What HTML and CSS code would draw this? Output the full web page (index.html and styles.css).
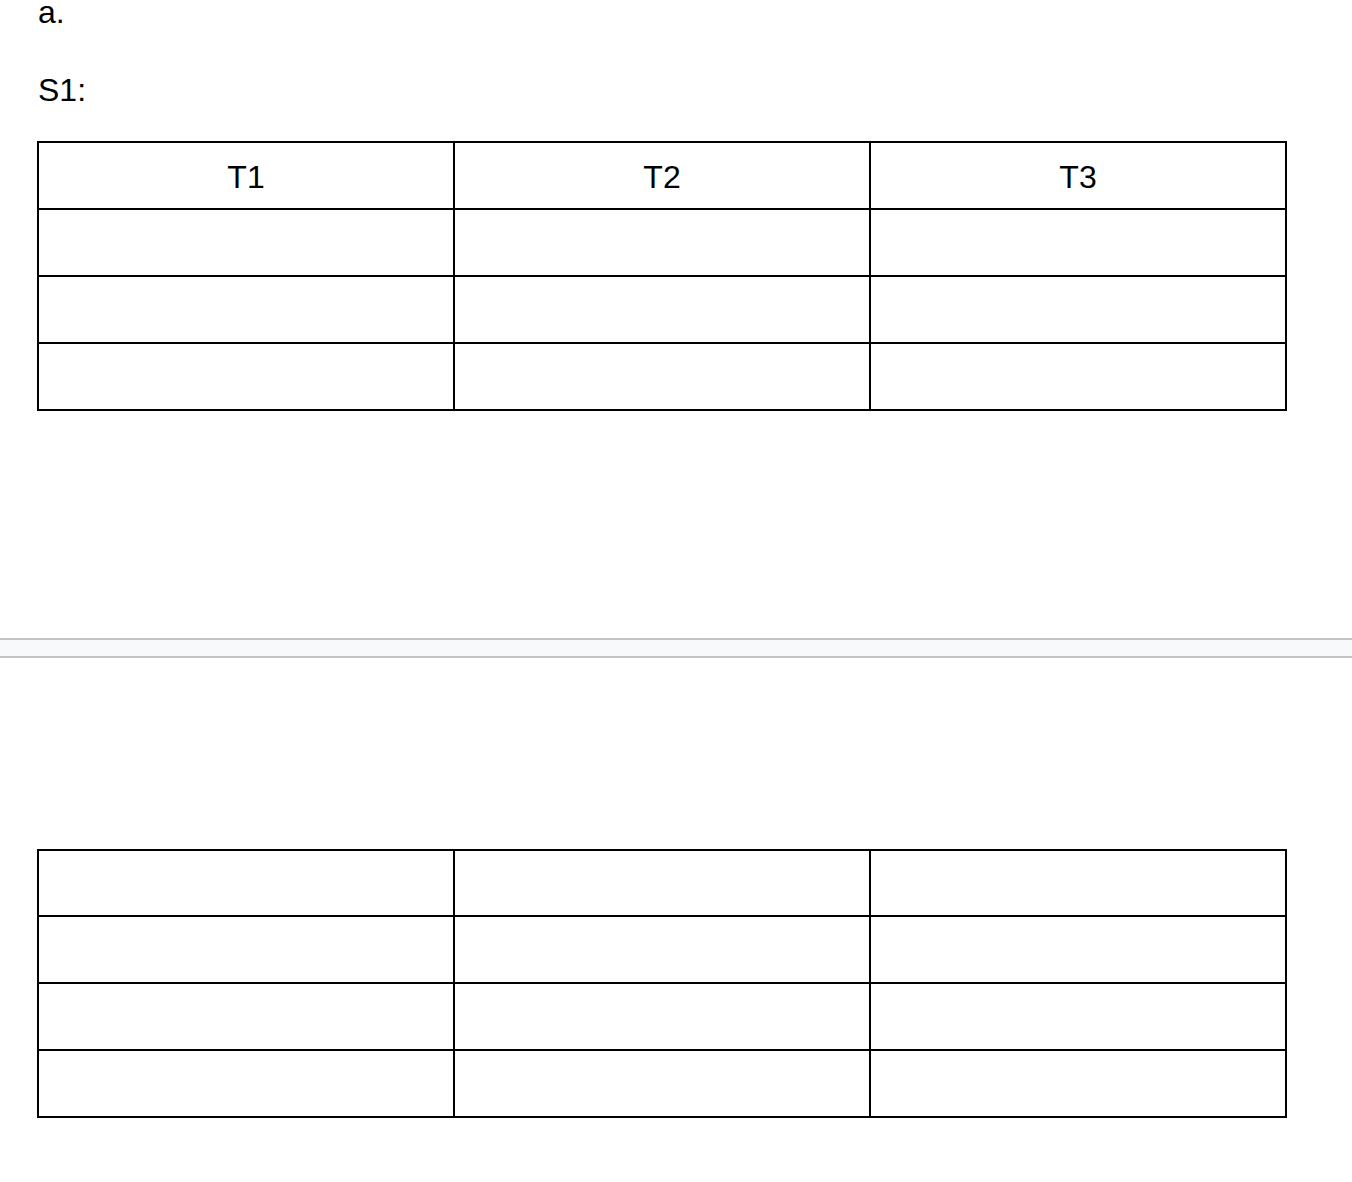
FILE: index.html
```html
<!DOCTYPE html>
<html lang="en">
<head>
<meta charset="utf-8">
<title>Document</title>
<link rel="stylesheet" href="styles.css">
</head>
<body>
<section class="page page-first">
  <p class="para para-a">a.</p>
  <p class="para para-s1">S1:</p>
  <table class="grid grid-first">
    <colgroup><col class="col"><col class="col"><col class="col"></colgroup>
    <tr><td class="cell cell-head">T1</td><td class="cell cell-head">T2</td><td class="cell cell-head">T3</td></tr>
    <tr><td class="cell"></td><td class="cell"></td><td class="cell"></td></tr>
    <tr><td class="cell"></td><td class="cell"></td><td class="cell"></td></tr>
    <tr><td class="cell"></td><td class="cell"></td><td class="cell"></td></tr>
  </table>
</section>
<div class="page-gap"></div>
<section class="page page-second">
  <table class="grid">
    <colgroup><col class="col"><col class="col"><col class="col"></colgroup>
    <tr><td class="cell"></td><td class="cell"></td><td class="cell"></td></tr>
    <tr><td class="cell"></td><td class="cell"></td><td class="cell"></td></tr>
    <tr><td class="cell"></td><td class="cell"></td><td class="cell"></td></tr>
    <tr><td class="cell"></td><td class="cell"></td><td class="cell"></td></tr>
  </table>
</section>
</body>
</html>
```

FILE: styles.css
```css
html, body {
  margin: 0;
  padding: 0;
  background: #ffffff;
  overflow: hidden;
}

body {
  font-family: "Liberation Sans", Arial, sans-serif;
  font-size: 32px;
  color: #000000;
}

.page {
  padding: 0 0 0 37px;
}

.para {
  margin: 0;
  line-height: 34px;
}

.para-a {
  margin-top: -5px;
  padding-left: 1px;
}

.para-s1 {
  margin-top: 44px;
  padding-left: 1px;
}

.grid {
  border-collapse: collapse;
  table-layout: fixed;
  width: 1250px;
}

.grid-first {
  margin-top: 34px;
}

.cell {
  border: 2px solid #000000;
  height: 64.9px;
  padding: 0;
  text-align: center;
  vertical-align: middle;
  line-height: 34px;
}

.cell-head {
  padding-top: 3px;
  height: 61.9px;
}

.page-first {
  padding-bottom: 227px;
}

.page-gap {
  height: 16px;
  background: #f8f9fa;
  border-top: 2px solid #c4c4c4;
  border-bottom: 2px solid #c4c4c4;
}

.page-second {
  padding-top: 191px;
}
```
